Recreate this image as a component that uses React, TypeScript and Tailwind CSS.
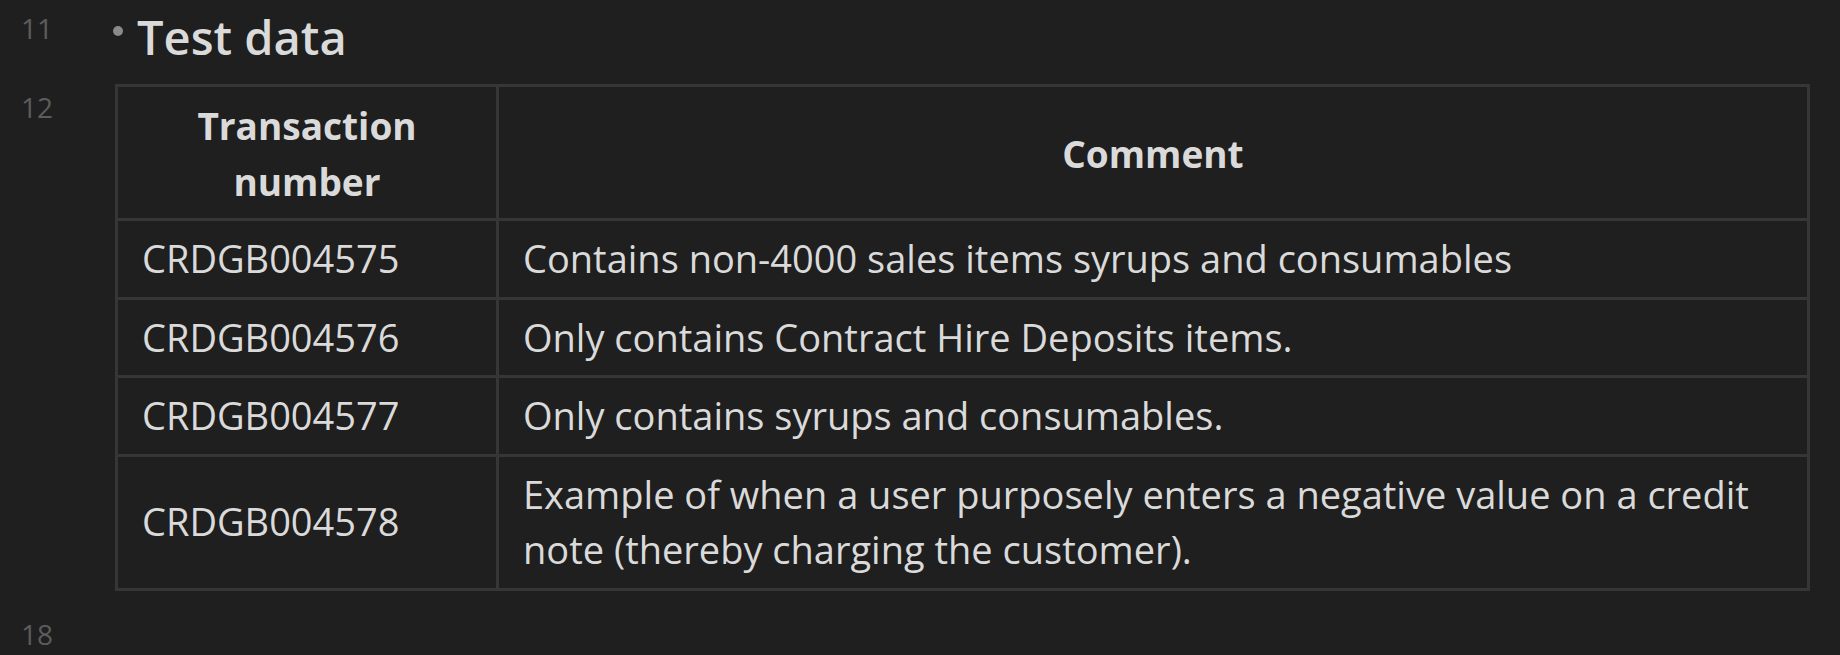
import React from "react";

const rows = [
  { id: "CRDGB004575", comment: "Contains non-4000 sales items syrups and consumables" },
  { id: "CRDGB004576", comment: "Only contains Contract Hire Deposits items." },
  { id: "CRDGB004577", comment: "Only contains syrups and consumables." },
  {
    id: "CRDGB004578",
    comment:
      "Example of when a user purposely enters a negative value on a credit note (thereby charging the customer).",
  },
];

const Gutter = ({ n, className }: { n: string; className: string }) => (
  <div
    className={
      "w-[53px] shrink-0 text-right text-[28px] leading-normal text-[#5c5c5c] " +
      className
    }
  >
    {n}
  </div>
);

export default function App() {
  return (
    <div className="min-h-screen bg-[#1f1f1f] text-[#dadada] font-['Open_Sans',sans-serif]">
      {/* line 11: heading */}
      <div className="flex h-[84px]">
        <Gutter n="11" className="pt-[7px]" />
        <div className="flex items-start pl-[60px]">
          <span className="mt-[26px] mr-[14px] h-[10px] w-[10px] rounded-full bg-[#8a8a8a]" />
          <h4 className="mt-[2px] text-[47px] font-semibold leading-normal">Test data</h4>
        </div>
      </div>

      {/* line 12: table */}
      <div className="flex">
        <Gutter n="12" className="pt-[2px]" />
        <div className="pl-[62px]">
          <table className="w-[1695px] table-fixed border-collapse text-[38px] leading-[55.5px]">
            <colgroup>
              <col className="w-[381px]" />
              <col />
            </colgroup>
            <thead>
              <tr>
                <th className="border-[3px] border-[#363636] px-[24px] pt-[11px] pb-[9px] text-center align-middle text-[37px] font-bold">
                  Transaction number
                </th>
                <th className="border-[3px] border-[#363636] px-[24px] pt-[11px] pb-[9px] text-center align-middle text-[37px] font-bold">
                  Comment
                </th>
              </tr>
            </thead>
            <tbody>
              {rows.map((r) => (
                <tr key={r.id}>
                  <td className="border-[3px] border-[#363636] px-[24px] py-[10px] align-middle">
                    {r.id}
                  </td>
                  <td className="border-[3px] border-[#363636] px-[24px] py-[10px] align-middle">
                    {r.comment}
                  </td>
                </tr>
              ))}
            </tbody>
          </table>
        </div>
      </div>

      {/* line 18: empty */}
      <div className="flex h-[66px]">
        <Gutter n="18" className="pt-[22px]" />
      </div>
    </div>
  );
}
